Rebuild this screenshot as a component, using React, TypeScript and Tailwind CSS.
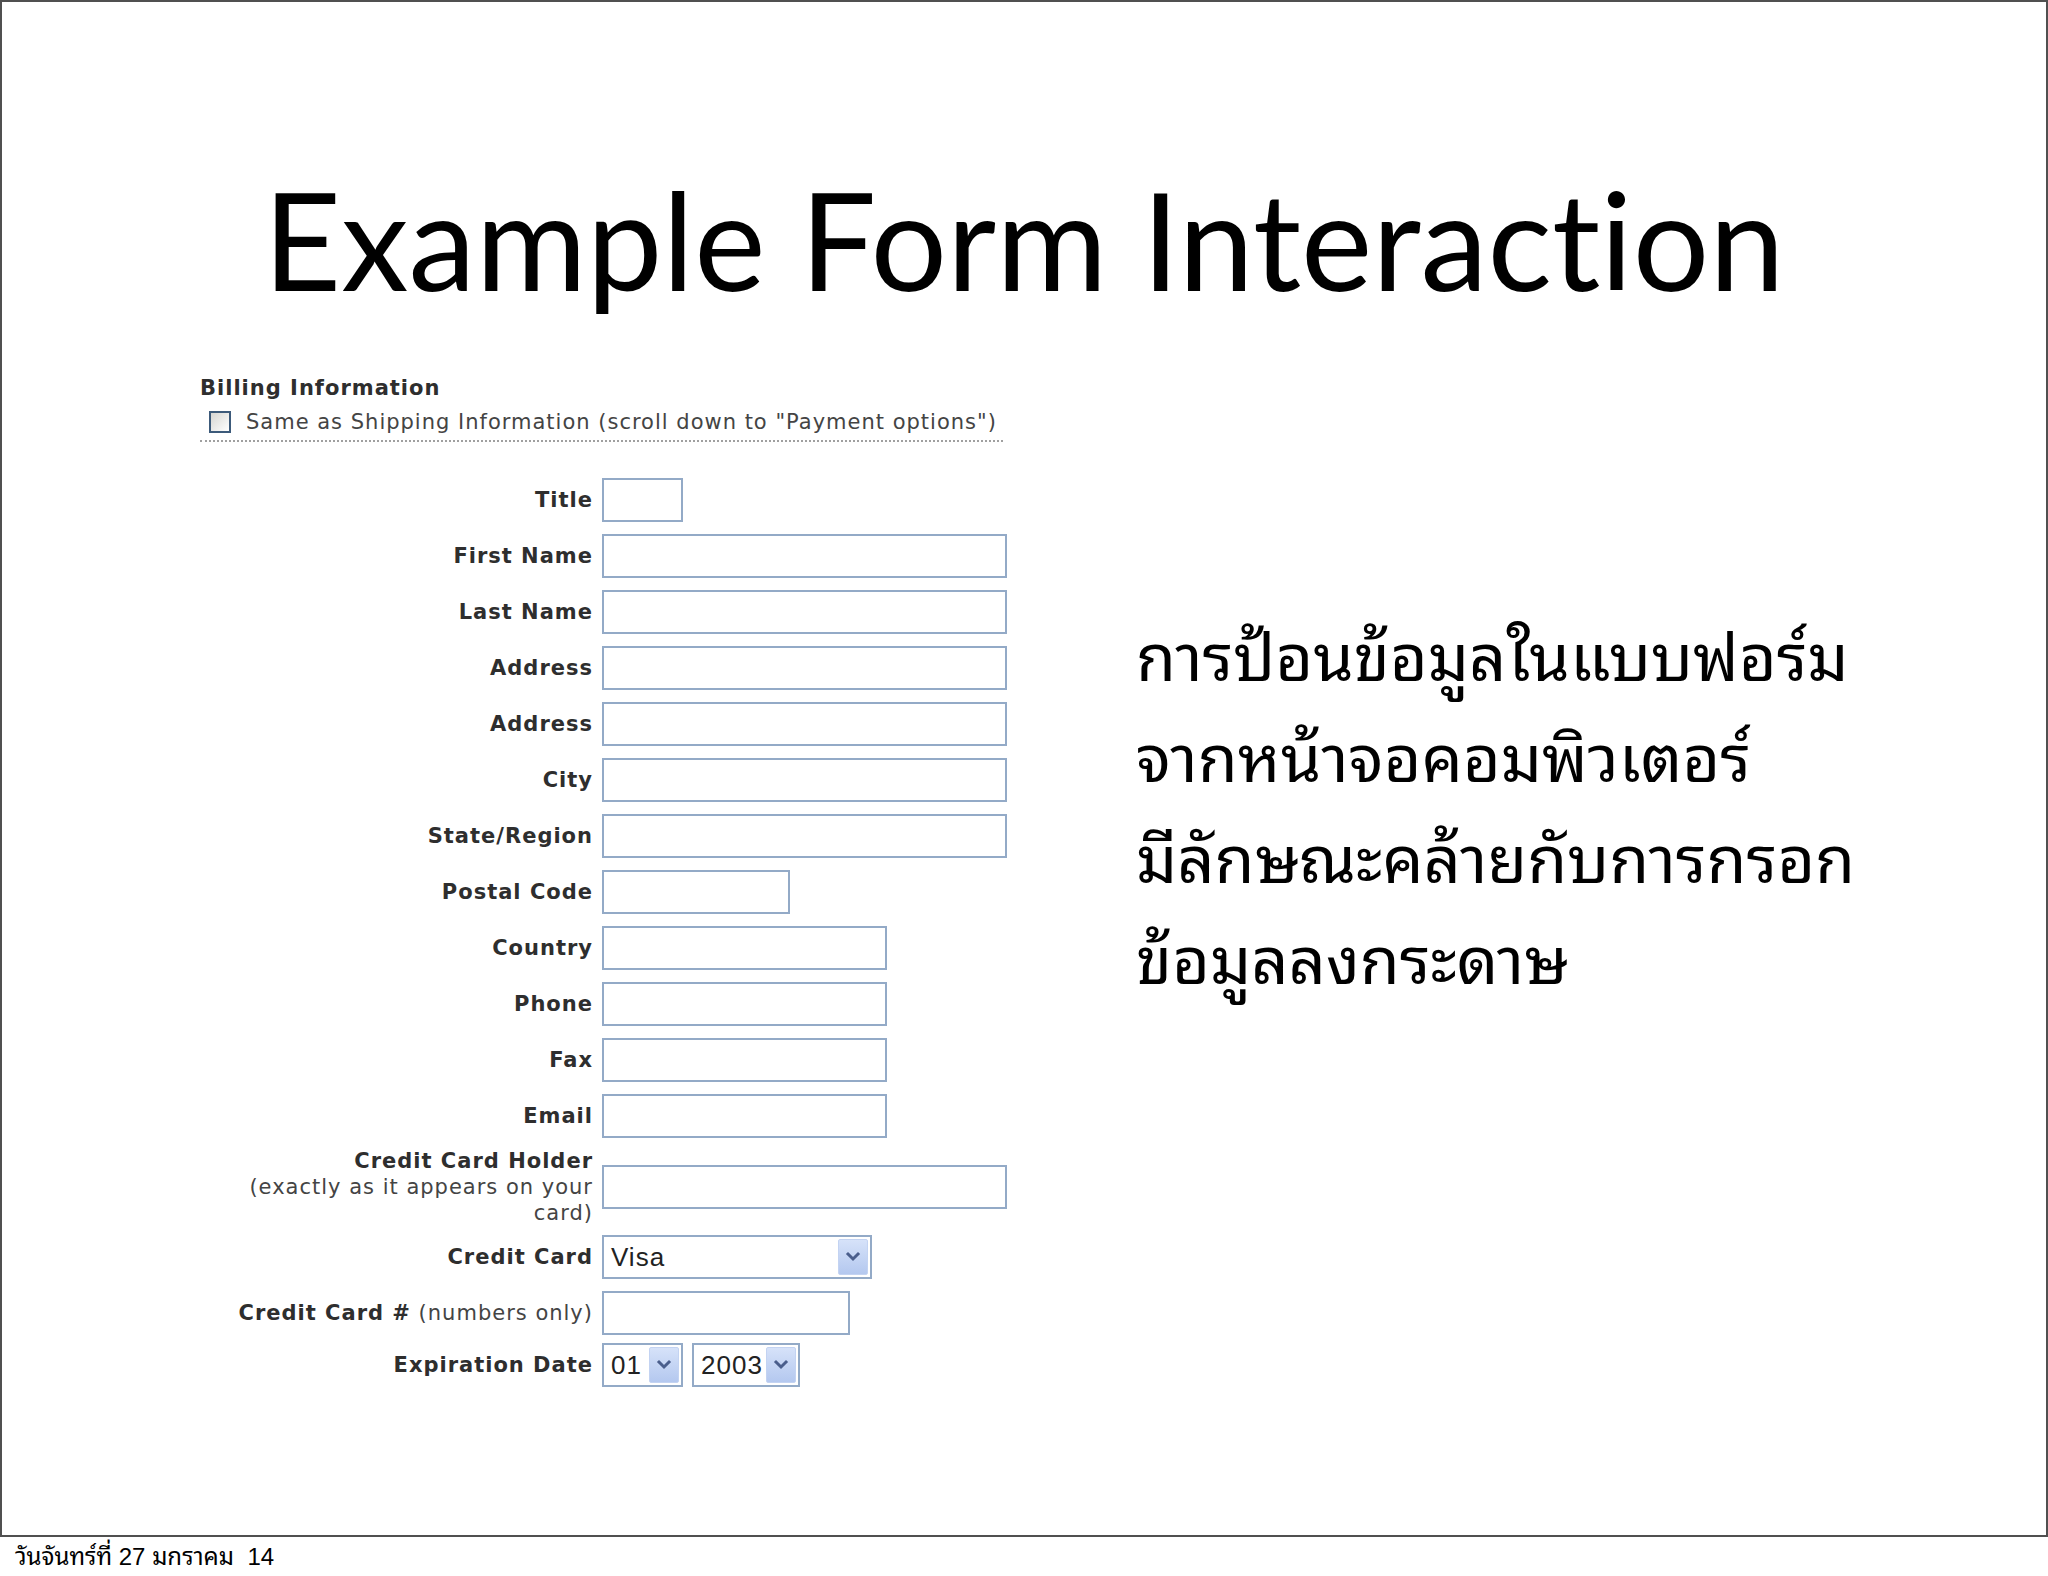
import React from "react";

const labelFont = { fontFamily: '"DejaVu Sans", Verdana, sans-serif' };

function Chevron() {
  return (
    <svg width="16" height="12" viewBox="0 0 16 12">
      <path d="M3 3 L8 8 L13 3" fill="none" stroke="#4a5e8c" strokeWidth="3" strokeLinecap="square" />
    </svg>
  );
}

function Select({ value, width }: { value: string; width: number }) {
  return (
    <div
      className="h-[44px] border-2 border-[#93aac7] bg-white flex items-center justify-between pl-[7px] pr-[2px]"
      style={{ width }}
    >
      <span className="text-[26px] text-[#222] leading-none" style={{ fontFamily: '"Liberation Sans", Arial, sans-serif' }}>
        {value}
      </span>
      <div className="w-[30px] h-[36px] rounded-[2px] bg-linear-to-b from-[#d6e2f9] to-[#b4c8ef] border border-[#c3d3f2] flex items-center justify-center">
        <Chevron />
      </div>
    </div>
  );
}

function Input({ width }: { width: number }) {
  return <div className="h-[44px] border-2 border-[#93aac7] bg-white" style={{ width }} />;
}

const simpleRows: { label: string; w: number }[] = [
  { label: "Title", w: 81 },
  { label: "First Name", w: 405 },
  { label: "Last Name", w: 405 },
  { label: "Address", w: 405 },
  { label: "Address", w: 405 },
  { label: "City", w: 405 },
  { label: "State/Region", w: 405 },
  { label: "Postal Code", w: 188 },
  { label: "Country", w: 285 },
  { label: "Phone", w: 285 },
  { label: "Fax", w: 285 },
  { label: "Email", w: 285 },
];

export default function App() {
  return (
    <div className="w-[2048px] h-[1576px] bg-white flex flex-col" style={{ fontFamily: '"Liberation Sans", Arial, sans-serif' }}>
      <div className="h-[1537px] border-2 border-[#505050] flex flex-col">
        <h1
          className="pt-[170px] text-center text-[135px] leading-none text-black [font-variant-ligatures:none]"
          style={{ fontFamily: 'Lato, "Open Sans", sans-serif' }}
        >
          Example Form Interaction
        </h1>
        <div className="flex mt-[69px]">
          <div className="pl-[198px] flex flex-col tracking-[1px]" style={labelFont}>
            <div className="h-[24px] leading-[24px] text-[21px] font-bold text-[#2e2e2e]">Billing Information</div>
            <div className="w-[803px] mt-[10px] pb-[6px] border-b-2 border-dotted border-[#a0a0a0] flex items-center">
              <div className="ml-[9px] w-[22px] h-[22px] border-2 border-[#3c5a7a] bg-linear-to-br from-[#d6d6d2] to-white" />
              <span className="ml-[15px] text-[21px] leading-[24px] text-[#444]">
                Same as Shipping Information (scroll down to "Payment options")
              </span>
            </div>
            <div className="mt-[36px] grid grid-cols-[393px_auto] gap-x-[9px] gap-y-[12px] items-center">
              {simpleRows.map((r, i) => (
                <React.Fragment key={i}>
                  <div className="text-right text-[21px] font-bold text-[#2e2e2e] leading-[24px]">{r.label}</div>
                  <Input width={r.w} />
                </React.Fragment>
              ))}
              <div className="-mt-[2px] -mb-[3px] text-right text-[21px] leading-[26px] text-[#444]">
                <span className="font-bold text-[#2e2e2e]">Credit Card Holder</span>
                <br />
                (exactly as it appears on your
                <br />
                card)
              </div>
              <Input width={405} />
              <div className="text-right text-[21px] font-bold text-[#2e2e2e] leading-[24px]">Credit Card</div>
              <Select value="Visa" width={270} />
              <div className="text-right text-[21px] leading-[24px] text-[#444]">
                <span className="font-bold text-[#2e2e2e]">Credit Card #</span> (numbers only)
              </div>
              <Input width={248} />
              <div className="-mt-[4px] text-right text-[21px] font-bold text-[#2e2e2e] leading-[24px]">Expiration Date</div>
              <div className="-mt-[4px] flex gap-[9px]">
                <Select value="01" width={81} />
                <Select value="2003" width={108} />
              </div>
            </div>
          </div>
          <div
            className="ml-[129px] mt-[226px] text-[65px] leading-[101px] text-black"
            style={{ fontFamily: '"Noto Sans Thai Looped", "Noto Sans Thai", Loma, Garuda, "Noto Sans", sans-serif' }}
          >
            <div>การป้อนข้อมูลในแบบฟอร์ม</div>
            <div>จากหน้าจอคอมพิวเตอร์</div>
            <div>มีลักษณะคล้ายกับการกรอก</div>
            <div>ข้อมูลลงกระดาษ</div>
          </div>
        </div>
      </div>
      <div
        className="flex-1 flex items-center pl-[15px] text-[24px] text-black"
        style={{ fontFamily: '"Liberation Sans", "Noto Sans Thai Looped", "Noto Sans Thai", sans-serif' }}
      >
        วันจันทร์ที่ 27 มกราคม&nbsp;&nbsp;14
      </div>
    </div>
  );
}
